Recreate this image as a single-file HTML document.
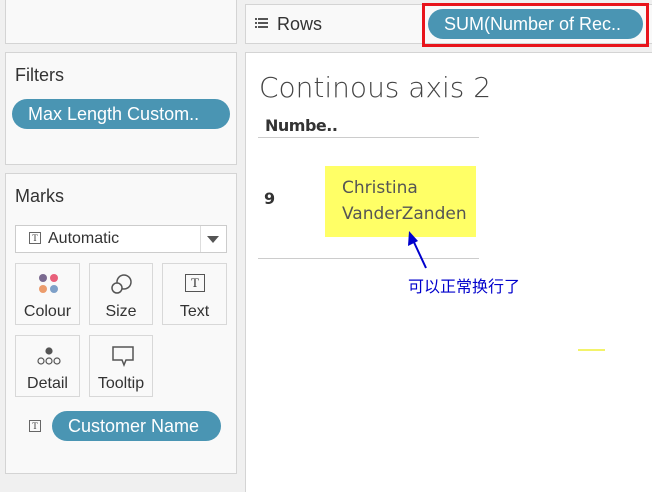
<!DOCTYPE html>
<html><head><meta charset="utf-8"><style>
*{box-sizing:border-box;margin:0;padding:0}
body{width:652px;height:484px;background:#f0f0f0;font-family:"Liberation Sans",sans-serif;position:relative;overflow:hidden;color:#333}
.box{position:absolute;background:#f9f9f9;border:1px solid #d4d4d4}
.pill{position:absolute;background:#4a95b3;color:#fff;border-radius:15px;font-size:18px;line-height:30px;padding-left:16px;white-space:nowrap}
.card{position:absolute;background:#f9f9f9;border:1px solid #d8d8d8;text-align:center;font-size:16px;color:#333}
.card span{position:absolute;left:0;right:0;bottom:3px}
.t{position:absolute;font-size:18px;color:#333}
</style></head><body>
<div class="box" style="left:5px;top:-2px;width:232px;height:46px"></div>
<div class="box" style="left:5px;top:52px;width:232px;height:113px"></div>
<div class="t" style="left:15px;top:65px">Filters</div>
<div class="pill" style="left:12px;top:99px;width:218px;height:30px">Max Length Custom..</div>
<div class="box" style="left:5px;top:173px;width:232px;height:301px"></div>
<div class="t" style="left:15px;top:186px">Marks</div>
<div style="position:absolute;left:15px;top:225px;width:212px;height:28px;background:#fff;border:1px solid #ccc"></div>
<div style="position:absolute;left:200px;top:226px;width:1px;height:26px;background:#ddd"></div>
<div style="position:absolute;left:207px;top:236px;border-left:6px solid transparent;border-right:6px solid transparent;border-top:7px solid #555"></div>
<div style="position:absolute;left:29px;top:232px;width:12px;height:12px;border:1px solid #666;font-size:9px;line-height:10px;text-align:center;font-family:'Liberation Serif',serif">T</div>
<div style="position:absolute;left:48px;top:230px;font-size:16px;color:#333">Automatic</div>
<div class="card" style="left:15px;top:263px;width:65px;height:62px">
<svg style="position:absolute;left:22px;top:9px" width="22" height="22"><circle cx="5" cy="5" r="4" fill="#7a6a90"/><circle cx="16" cy="5" r="4" fill="#e8607a"/><circle cx="5" cy="16" r="4" fill="#ec9c6c"/><circle cx="16" cy="16" r="4" fill="#7ea0c8"/></svg><span>Colour</span></div>
<div class="card" style="left:89px;top:263px;width:64px;height:62px">
<svg style="position:absolute;left:20px;top:8px" width="24" height="24" fill="none" stroke="#555" stroke-width="1.5"><circle cx="14" cy="10" r="7"/><circle cx="7" cy="16" r="5" fill="#f9f9f9"/></svg><span>Size</span></div>
<div class="card" style="left:162px;top:263px;width:65px;height:62px">
<div style="position:absolute;left:22px;top:10px;width:20px;height:18px;border:1.5px solid #555;font-size:13px;line-height:15px;font-family:'Liberation Serif',serif">T</div><span>Text</span></div>
<div class="card" style="left:15px;top:335px;width:65px;height:62px">
<svg style="position:absolute;left:20px;top:10px" width="26" height="22" fill="none" stroke="#555" stroke-width="1.2"><circle cx="13" cy="5" r="3" fill="#555"/><circle cx="5" cy="15" r="3"/><circle cx="13" cy="15" r="3"/><circle cx="21" cy="15" r="3"/></svg><span>Detail</span></div>
<div class="card" style="left:89px;top:335px;width:64px;height:62px">
<svg style="position:absolute;left:21px;top:9px" width="24" height="22" fill="none" stroke="#555" stroke-width="1.5"><path d="M2 2H22V15H15L13 20L11 15H2Z"/></svg><span>Tooltip</span></div>
<div style="position:absolute;left:29px;top:420px;width:12px;height:12px;border:1px solid #666;font-size:9px;line-height:10px;text-align:center;font-family:'Liberation Serif',serif">T</div>
<div class="pill" style="left:52px;top:411px;width:169px;height:30px">Customer Name</div>
<div class="box" style="left:245px;top:4px;width:420px;height:40px"></div>
<svg style="position:absolute;left:255px;top:18px" width="13" height="10" fill="#555"><rect x="0" y="0" width="2" height="2"/><rect x="3" y="0" width="10" height="2"/><rect x="0" y="4" width="2" height="2"/><rect x="3" y="4" width="10" height="2"/><rect x="0" y="8" width="2" height="2"/><rect x="3" y="8" width="10" height="2"/></svg>
<div class="t" style="left:277px;top:14px">Rows</div>
<div class="pill" style="left:428px;top:9px;width:215px;height:30px">SUM(Number of Rec..</div>
<div style="position:absolute;left:422px;top:3px;width:227px;height:44px;border:3px solid #e8141b"></div>
<div style="position:absolute;left:245px;top:52px;width:420px;height:440px;background:#fff;border-left:1px solid #d4d4d4;border-top:1px solid #d4d4d4"></div>
<div style="position:absolute;left:259px;top:71px;font-size:28px;color:#444;font-family:'DejaVu Sans',sans-serif;font-weight:200">Continous axis 2</div>
<div style="position:absolute;left:265px;top:116px;font-size:16px;color:#333;font-family:'DejaVu Sans',sans-serif;font-weight:bold;letter-spacing:-0.5px">Numbe..</div>
<div style="position:absolute;left:258px;top:137px;width:221px;height:1px;background:#ccc"></div>
<div style="position:absolute;left:264px;top:189px;font-size:16px;font-family:'DejaVu Sans',sans-serif;font-weight:bold">9</div>
<div style="position:absolute;left:325px;top:166px;width:151px;height:71px;background:#ffff66"></div>
<div style="position:absolute;left:342px;top:175px;font-size:17px;line-height:26px;color:#555;font-family:'DejaVu Sans',sans-serif">Christina<br>VanderZanden</div>
<div style="position:absolute;left:258px;top:258px;width:221px;height:1px;background:#ccc"></div>
<svg style="position:absolute;left:400px;top:228px" width="30" height="45"><line x1="26" y1="40" x2="12" y2="10" stroke="#0000cc" stroke-width="2"/><path d="M9 3L8 18L18 13Z" fill="#0000cc"/></svg>
<div style="position:absolute;left:408px;top:273px;font-size:16px;color:#0000cc;font-family:'Noto Sans CJK SC',sans-serif">可以正常换行了</div>
<div style="position:absolute;left:578px;top:349px;width:27px;height:2px;background:#f3f36a"></div>
</body></html>
